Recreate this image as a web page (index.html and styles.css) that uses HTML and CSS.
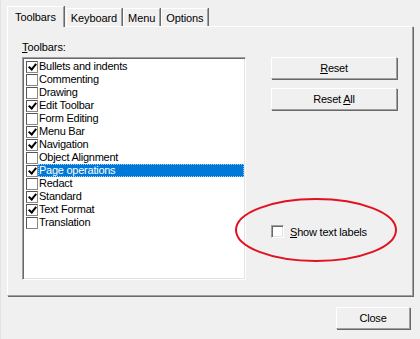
FILE: index.html
```html
<!DOCTYPE html>
<html>
<head>
<meta charset="utf-8">
<link rel="stylesheet" href="styles.css">
</head>
<body>
<div class="dialog">
  <div class="tabs">
    <div class="tab active">Toolbars</div>
    <div class="tab">Keyboard</div>
    <div class="tab">Menu</div>
    <div class="tab">Options</div>
  </div>
  <div class="panel">
    <div class="left">
      <div class="label"><u>T</u>oolbars:</div>
      <div class="listbox">
        <div class="item"><span class="cb checked"></span><span class="txt">Bullets and indents</span></div>
        <div class="item"><span class="cb"></span><span class="txt">Commenting</span></div>
        <div class="item"><span class="cb"></span><span class="txt">Drawing</span></div>
        <div class="item"><span class="cb checked"></span><span class="txt">Edit Toolbar</span></div>
        <div class="item"><span class="cb"></span><span class="txt">Form Editing</span></div>
        <div class="item"><span class="cb checked"></span><span class="txt">Menu Bar</span></div>
        <div class="item"><span class="cb checked"></span><span class="txt">Navigation</span></div>
        <div class="item"><span class="cb"></span><span class="txt">Object Alignment</span></div>
        <div class="item selected"><span class="cb checked"></span><span class="txt">Page operations</span></div>
        <div class="item"><span class="cb"></span><span class="txt">Redact</span></div>
        <div class="item"><span class="cb checked"></span><span class="txt">Standard</span></div>
        <div class="item"><span class="cb checked"></span><span class="txt">Text Format</span></div>
        <div class="item"><span class="cb"></span><span class="txt">Translation</span></div>
      </div>
    </div>
    <div class="right">
      <button class="btn wide"><u>R</u>eset</button>
      <button class="btn wide">Reset <u>A</u>ll</button>
      <div class="spacer"></div>
      <label class="showlabels"><span class="cb3d"></span><span><u>S</u>how text labels</span></label>
    </div>
  </div>
  <div class="footer">
    <button class="btn close">Close</button>
  </div>
  <svg class="annotation" width="170" height="70" viewBox="0 0 170 70">
    <ellipse cx="85" cy="33" rx="80" ry="31" fill="none" stroke="#e3101f" stroke-width="2"/>
  </svg>
</div>
</body>
</html>
```
FILE: styles.css
```css
html, body {
  margin: 0;
  padding: 0;
}
body {
  background: #f0f0f0;
  font-family: "Liberation Sans", Arial, sans-serif;
  font-size: 11px;
  color: #000;
  width: 420px;
  height: 339px;
  overflow: hidden;
}
.dialog {
  position: relative;
  width: 420px;
  height: 339px;
  box-sizing: border-box;
  border-left: 1px solid #e3e3e3;
  padding-top: 6px;
}
.tabs {
  display: flex;
  align-items: flex-end;
  margin-left: 6px;
  height: 20px;
  position: relative;
  z-index: 2;
}
.tab {
  box-sizing: border-box;
  height: 18px;
  padding: 2px 4px 0 4px;
  border-top: 1px solid #fff;
  border-left: 1px solid #fff;
  border-right: 1px solid #a0a0a0;
  box-shadow: 1px 0 0 #696969;
  margin-right: 1px;
  line-height: 14px;
  white-space: nowrap;
  letter-spacing: -0.1px;
}
.tab.active {
  height: 21px;
  margin-bottom: -1px;
  padding: 3px 7px 0 7px;
  background: #f0f0f0;
  margin-right: 2px;
}
.panel {
  box-sizing: border-box;
  margin-left: 6px;
  width: 406px;
  height: 270px;
  border-top: 1px solid #fff;
  border-left: 1px solid #fff;
  border-right: 1px solid #a0a0a0;
  border-bottom: 1px solid #a0a0a0;
  box-shadow: 1px 1px 0 #696969;
  display: flex;
  padding: 13px 14px 0 14px;
}
.left {
  display: flex;
  flex-direction: column;
}
.label {
  height: 17px;
  line-height: 14px;
  letter-spacing: -0.1px;
}
.listbox {
  box-sizing: border-box;
  width: 224px;
  height: 223px;
  background: #fff;
  border-top: 1px solid #a0a0a0;
  border-left: 1px solid #a0a0a0;
  border-right: 1px solid #fff;
  border-bottom: 1px solid #fff;
  box-shadow: inset 1px 1px 0 #696969, inset -1px -1px 0 #e3e3e3;
  padding: 2px 1px 0 2px;
}
.item {
  display: flex;
  align-items: center;
  height: 13px;
}
.cb {
  box-sizing: border-box;
  width: 12px;
  height: 12px;
  margin-left: 1px;
  border: 1px solid #555;
  border-right-color: #888;
  border-bottom-color: #888;
  background: #fff;
  flex: none;
  position: relative;
}
.cb.checked::after {
  content: "";
  position: absolute;
  left: 3px;
  top: 0px;
  width: 3px;
  height: 6px;
  border-right: 2px solid #000;
  border-bottom: 2px solid #000;
  transform: rotate(40deg);
}
.txt {
  flex: 1;
  height: 13px;
  line-height: 13px;
  padding-left: 1px;
  margin-left: 0;
  letter-spacing: -0.25px;
  box-sizing: border-box;
  white-space: nowrap;
}
.item.selected .txt {
  background: #0078d7;
  color: #fff;
  outline: 1px dotted #9fd0ff;
  outline-offset: -1px;
}
.right {
  display: flex;
  flex-direction: column;
  margin-left: 25px;
  padding-top: 17px;
}
.btn {
  box-sizing: border-box;
  font-family: "Liberation Sans", Arial, sans-serif;
  font-size: 11px;
  color: #000;
  background: #f0f0f0;
  height: 22px;
  border-top: 1px solid #fff;
  border-left: 1px solid #fff;
  border-right: 1px solid #a0a0a0;
  border-bottom: 1px solid #a0a0a0;
  box-shadow: 1px 1px 0 #696969;
  padding: 0;
  margin: 0;
  letter-spacing: -0.2px;
}
.btn.wide {
  width: 126px;
  margin-bottom: 9px;
}
.spacer {
  height: 106px;
}
.showlabels {
  display: flex;
  align-items: center;
  gap: 6px;
  letter-spacing: -0.2px;
}
.cb3d {
  box-sizing: border-box;
  width: 13px;
  height: 13px;
  background: #fff;
  border-top: 1px solid #a0a0a0;
  border-left: 1px solid #a0a0a0;
  border-right: 1px solid #fff;
  border-bottom: 1px solid #fff;
  box-shadow: inset 1px 1px 0 #696969, inset -1px -1px 0 #e3e3e3;
}
.footer {
  display: flex;
  justify-content: flex-end;
  padding: 11px 10px 0 0;
}
.btn.close {
  width: 74px;
}
.annotation {
  position: absolute;
  left: 230px;
  top: 197px;
}
```
